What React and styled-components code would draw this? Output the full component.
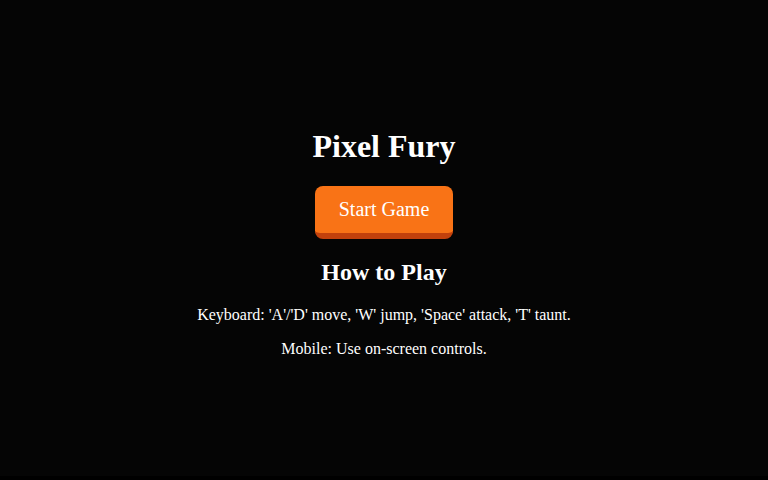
import React, { useState } from "react";
import styled, { createGlobalStyle } from "styled-components";

const GlobalStyle = createGlobalStyle`
  * {
    box-sizing: border-box;
  }

  body {
    margin: 0;
    background-color: #000;
    font-family: "Liberation Serif", "Times New Roman", serif;
  }
`;

const Game = styled.div`
  min-height: 100vh;
  display: flex;
  flex-direction: column;
  padding-bottom: 4px;
`;

const StartScreen = styled.main`
  flex: 1;
  display: flex;
  flex-direction: column;
  align-items: center;
  justify-content: center;
  padding-top: 5px;
  color: white;
  background-color: #050505;
  text-align: center;
`;

const Title = styled.h1`
  margin: 21px 0 22px;
  font-size: 32px;
  line-height: 36px;
`;

const StartButton = styled.button`
  padding: 12px 24px;
  border: none;
  border-bottom: 6px solid #c2410c;
  border-radius: 8px;
  color: white;
  background-color: #f97316;
  font-family: inherit;
  font-size: 20px;
  cursor: pointer;
`;

const Subtitle = styled.h2`
  margin: 20px 0;
  font-size: 24px;
  line-height: 27px;
`;

const Hint = styled.p`
  margin: 0 0 16px;
  font-size: 16px;
  line-height: 18px;
`;

const hints = [
  "Keyboard: 'A'/'D' move, 'W' jump, 'Space' attack, 'T' taunt.",
  "Mobile: Use on-screen controls.",
];

function App() {
  const [started, setStarted] = useState(false);

  return (
    <Game>
      <GlobalStyle />
      <StartScreen>
        {!started && (
          <>
            <Title>Pixel Fury</Title>
            <StartButton type="button" onClick={() => setStarted(true)}>
              Start Game
            </StartButton>
            <Subtitle>How to Play</Subtitle>
            {hints.map((hint) => (
              <Hint key={hint}>{hint}</Hint>
            ))}
          </>
        )}
      </StartScreen>
    </Game>
  );
}

export default App;
